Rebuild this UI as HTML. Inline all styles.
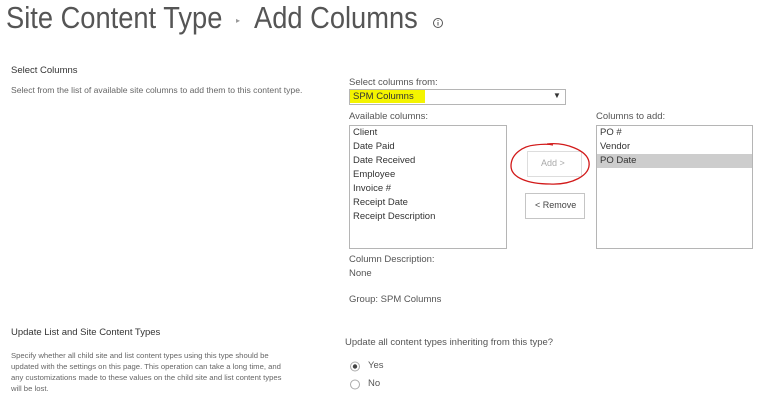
<!DOCTYPE html>
<html><head><style>
body{margin:0;width:768px;height:407px;background:#fff;position:relative;overflow:hidden;font-family:"Liberation Sans",sans-serif;color:#444}
.a{position:absolute;white-space:nowrap}
.s{font-size:9.5px;color:#333}
.d{font-size:8px;color:#666}
.box{position:absolute;border:1px solid #b5b5b5;background:#fff}
.li{position:absolute;left:3px;font-size:9.5px;color:#333}
.t{font-size:31px;color:#555;transform:scaleX(0.88);transform-origin:0 0}
</style></head><body>
<div class="a t" style="left:6px;top:0px">Site Content Type</div>
<div class="a" style="left:236px;top:16px;font-size:8px;color:#999">&#9656;</div>
<div class="a t" style="left:254px;top:0px">Add Columns</div>
<svg class="a" style="left:432px;top:17px" width="12" height="12"><circle cx="6" cy="6" r="4.5" fill="none" stroke="#555" stroke-width="1"/><rect x="5.5" y="5" width="1" height="3.5" fill="#555"/><rect x="5.5" y="3" width="1" height="1" fill="#555"/></svg>

<div class="a s" style="left:11px;top:65px">Select Columns</div>
<div class="a d" style="left:11px;top:85px;font-size:8.6px">Select from the list of available site columns to add them to this content type.</div>

<div class="a s" style="left:349px;top:77px;color:#555">Select columns from:</div>
<div class="box" style="left:349px;top:89px;width:215px;height:14px"></div>
<div class="a" style="left:350px;top:90px;width:75px;height:13px;background:#f4f400"></div>
<div class="a s" style="left:353px;top:91px">SPM Columns</div>
<div class="a" style="left:553px;top:91px;font-size:8px;color:#333">&#9660;</div>

<div class="a s" style="left:349px;top:111px;color:#555">Available columns:</div>
<div class="box" style="left:349px;top:125px;width:156px;height:122px">
<div class="li" style="top:1px">Client</div><div class="li" style="top:15px">Date Paid</div><div class="li" style="top:29px">Date Received</div><div class="li" style="top:43px">Employee</div><div class="li" style="top:57px">Invoice #</div><div class="li" style="top:71px">Receipt Date</div><div class="li" style="top:85px">Receipt Description</div>
</div>

<div class="box" style="left:527px;top:151px;width:53px;height:24px;border-color:#ddd"></div>
<div class="a" style="left:541px;top:158px;font-size:9px;color:#aaa">Add &gt;</div>
<div class="box" style="left:525px;top:193px;width:58px;height:24px;border-color:#c5c5c5"></div>
<div class="a" style="left:535px;top:200px;font-size:9px;color:#444">&lt; Remove</div>
<svg class="a" style="left:505px;top:140px" width="90" height="50"><path d="M42 4 C60 2,82 10,84 22 C86 36,66 45,45 44 C24 44,6 38,6 26 C6 14,18 6,30 5 C38 4,44 4,48 5" fill="none" stroke="#d21a1a" stroke-width="1.3"/></svg>

<div class="a s" style="left:596px;top:111px;color:#555">Columns to add:</div>
<div class="box" style="left:596px;top:125px;width:155px;height:122px">
<div class="a" style="left:0;top:28px;width:155px;height:14px;background:#cdcdcd"></div>
<div class="li" style="top:1px">PO #</div><div class="li" style="top:15px">Vendor</div><div class="li" style="top:29px">PO Date</div>
</div>

<div class="a s" style="left:349px;top:254px;color:#555">Column Description:</div>
<div class="a s" style="left:349px;top:268px;color:#555">None</div>
<div class="a s" style="left:349px;top:294px;color:#555">Group: SPM Columns</div>

<div class="a s" style="left:11px;top:327px">Update List and Site Content Types</div>
<div class="a d" style="left:11px;top:350px;line-height:11px;font-size:7.7px">Specify whether all child site and list content types using this type should be<br>updated with the settings on this page. This operation can take a long time, and<br>any customizations made to these values on the child site and list content types<br>will be lost.</div>
<div class="a s" style="left:345px;top:337px;color:#555">Update all content types inheriting from this type?</div>
<svg class="a" style="left:349px;top:361px" width="12" height="30"><circle cx="6" cy="5.5" r="4.5" fill="#fff" stroke="#aaa"/><circle cx="6" cy="5.5" r="2.2" fill="#444"/><circle cx="6" cy="23.5" r="4.5" fill="#fff" stroke="#aaa"/></svg>
<div class="a s" style="left:368px;top:360px;color:#555">Yes</div>
<div class="a s" style="left:368px;top:378px;color:#555">No</div>
</body></html>
